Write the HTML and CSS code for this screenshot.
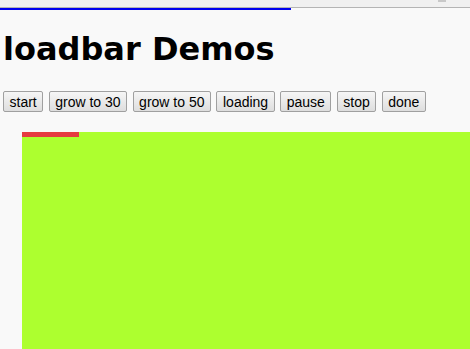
FILE: index.html
```html
<!DOCTYPE html>
<html lang="en">
<head>
    <meta charset="UTF-8">
    <title>loadbar Demos</title>
    <link rel="stylesheet" href="styles.css">
</head>
<body>
    <div class="chrome">
        <span class="chrome-mark"></span>
    </div>
    <div class="loadbar"></div>

    <div class="page">
        <h1>loadbar Demos</h1>

        <div class="controls">
            <button class="button">start</button>
            <button class="button">grow to 30</button>
            <button class="button">grow to 50</button>
            <button class="button">loading</button>
            <button class="button">pause</button>
            <button class="button">stop</button>
            <button class="button">done</button>
        </div>

        <!-- box demo -->
        <div class="demo-box">
            <div class="demo-bar"></div>
        </div>
    </div>
</body>
</html>
```

FILE: styles.css
```css
* {
    margin: 0;
    padding: 0;
    box-sizing: border-box;
}

body {
    background: #f9f9f9;
    font-family: 'Liberation Sans', Arial, sans-serif;
    overflow: hidden;
    height: 349px;
}

.chrome {
    position: relative;
    height: 8px;
    background: #f0f0f0;
    border-bottom: 1px solid #b4b4b4;
}

.chrome-mark {
    position: absolute;
    top: 0;
    left: 438px;
    width: 8px;
    height: 2px;
    background: #c8c8c8;
}

.loadbar {
    width: 291px;
    height: 2px;
    background: #0000ee;
}

.page {
    padding: 0 0 0 3px;
}

h1 {
    font-family: 'DejaVu Sans', Verdana, sans-serif;
    font-size: 32px;
    font-weight: bold;
    color: #000;
    line-height: 38px;
    margin-top: 20px;
}

.controls {
    display: flex;
    gap: 5.5px;
    margin-top: 23px;
}

.button {
    font-family: 'Liberation Sans', Arial, sans-serif;
    font-size: 14px;
    color: #000;
    height: 21px;
    padding: 0 5.5px;
    background: linear-gradient(#f6f6f6, #dedede);
    border: 1px solid #a0a0a0;
    border-radius: 2px;
}

.demo-box {
    margin: 20px 0 0 19px;
    height: 230px;
    background: #adff2f;
}

.demo-bar {
    width: 57px;
    height: 5px;
    background: #e53a40;
}
```
